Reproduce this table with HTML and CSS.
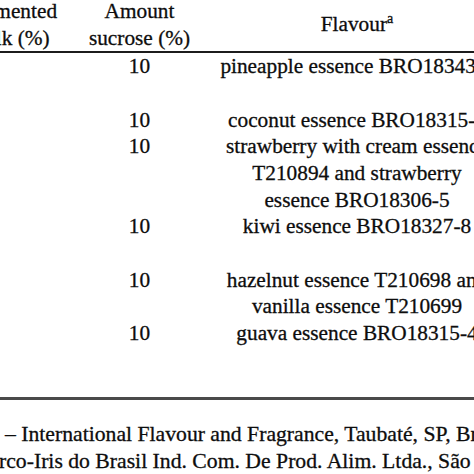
FILE: index.html
```html
<!DOCTYPE html>
<html lang="en">
<head>
<meta charset="utf-8">
<title>Table – flavoured fermented milk</title>
<link rel="stylesheet" href="styles.css">
</head>
<body>
<div class="sheet">
  <div class="head">
    <div class="cell c1">Fermented<br>milk (%)</div>
    <div class="cell c2">Amount<br>sucrose (%)</div>
    <div class="cell c3 mid">Flavour<sup>a</sup></div>
  </div>
  <div class="rule-top"></div>
  <div class="rows">
    <div class="row gap1">
      <div class="cell c1"></div>
      <div class="cell c2">10</div>
      <div class="cell c3">pineapple essence BRO18343-2</div>
    </div>
    <div class="row">
      <div class="cell c1"></div>
      <div class="cell c2">10</div>
      <div class="cell c3">coconut essence BRO18315-4</div>
    </div>
    <div class="row">
      <div class="cell c1"></div>
      <div class="cell c2">10</div>
      <div class="cell c3">strawberry with cream essence<br>T210894 and strawberry<br>essence BRO18306-5</div>
    </div>
    <div class="row gap1">
      <div class="cell c1"></div>
      <div class="cell c2">10</div>
      <div class="cell c3">kiwi essence BRO18327-8</div>
    </div>
    <div class="row">
      <div class="cell c1"></div>
      <div class="cell c2">10</div>
      <div class="cell c3">hazelnut essence T210698 and<br>vanilla essence T210699</div>
    </div>
    <div class="row gap2">
      <div class="cell c1"></div>
      <div class="cell c2">10</div>
      <div class="cell c3">guava essence BRO18315-4</div>
    </div>
  </div>
  <div class="rule-bottom"></div>
  <div class="notes">
    <p class="note n1">– International Flavour and Fragrance, Taubaté, SP, Brazil;</p>
    <p class="note n2">rco-Iris do Brasil Ind. Com. De Prod. Alim. Ltda., São Paulo, SP, Brazil.</p>
  </div>
</div>
</body>
</html>
```

FILE: styles.css
```css
html, body {
  margin: 0;
  padding: 0;
  background: #ffffff;
  overflow: hidden;
}

body {
  width: 474px;
  height: 474px;
  font-family: "Liberation Serif", "Times New Roman", serif;
  font-size: 21.3px;
  line-height: 26.67px;
  color: #0d0d0d;
  -webkit-text-stroke: 0.3px #0d0d0d;
}

.sheet {
  width: 560px;
  margin-left: -39px;
}

.head,
.row {
  display: grid;
  grid-template-columns: 101px 153px 306px;
}

.head {
  margin-top: -2px;
  height: 53.34px;
}

.cell {
  white-space: nowrap;
  text-align: center;
}

.c2 {
  padding-left: 2px;
}

.c3 {
  width: 282px;
  display: flex;
  flex-direction: column;
  align-items: center;
  margin-left: 1px;
}

.c3.mid {
  display: block;
  align-self: center;
}

sup {
  font-size: 0.66em;
  line-height: 0;
  vertical-align: 0.55em;
}

.rule-top {
  height: 2px;
  background: #1c1c1c;
}

.gap1 {
  padding-bottom: 26.67px;
}

.gap2 {
  padding-bottom: 50.5px;
}

.rule-bottom {
  height: 3px;
  background: #4a4a4a;
}

.notes {
  padding-top: 21px;
  font-size: 21.7px;
}

.note {
  margin: 0;
  white-space: nowrap;
  height: 26.5px;
}

.n1 {
  padding-left: 44px;
}

.n2 {
  padding-left: 38px;
}
```
